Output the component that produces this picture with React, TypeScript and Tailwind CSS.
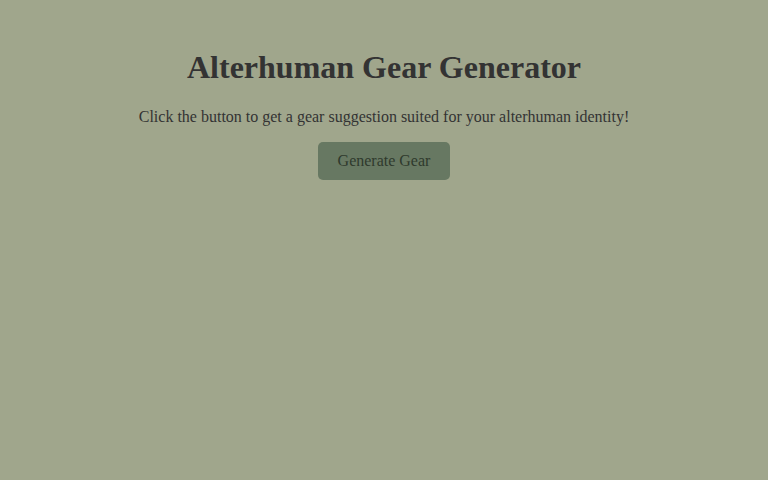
export default function App() {
  return (
    <div className="min-h-[480px] bg-[#a0a68c] pt-[49px] text-center text-[#333] [font-family:'Liberation_Serif',serif]">
      <h1 className="mb-[22px] text-[32px] font-bold leading-[37px]">Alterhuman Gear Generator</h1>
      <p className="mb-4 text-base leading-[18px]">
        Click the button to get a gear suggestion suited for your alterhuman identity!
      </p>
      <button className="rounded-[5px] bg-[#677862] px-5 py-[10px] text-base leading-[18px] text-[#2f3a2d]">
        Generate Gear
      </button>
    </div>
  );
}
